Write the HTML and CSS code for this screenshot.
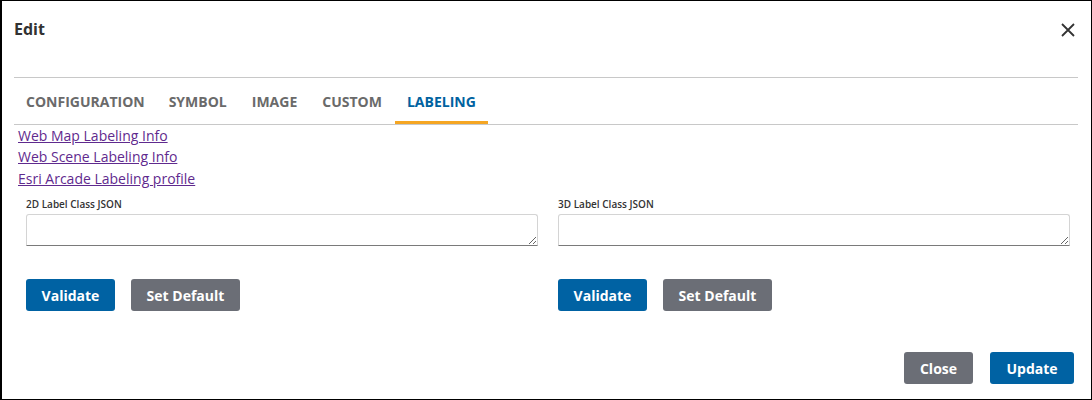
FILE: index.html
```html
<!DOCTYPE html>
<html lang="en">
<head>
    <meta charset="UTF-8">
    <title>Edit</title>
    <link rel="stylesheet" href="styles.css">
</head>
<body>
    <div class="dialog">
        <div class="dialog-header">
            <h2>Edit</h2>
            <button class="close-x" aria-label="Close">
                <svg width="14" height="14" viewBox="0 0 14 14"><path d="M1 1L13 13M13 1L1 13" stroke="#333" stroke-width="1.8" fill="none"/></svg>
            </button>
        </div>

        <!-- Tabs -->
        <div class="tabs">
            <button class="tab">Configuration</button>
            <button class="tab">Symbol</button>
            <button class="tab">Image</button>
            <button class="tab">Custom</button>
            <button class="tab active">Labeling</button>
        </div>

        <div class="tab-body">
            <div class="links">
                <a href="#">Web Map Labeling Info</a>
                <a href="#">Web Scene Labeling Info</a>
                <a href="#">Esri Arcade Labeling profile</a>
            </div>

            <div class="label-columns">
                <div class="label-col">
                    <label class="field-label">2D Label Class JSON</label>
                    <textarea class="json-input"></textarea>
                    <div class="btn-row">
                        <button class="btn btn-primary">Validate</button>
                        <button class="btn btn-secondary">Set Default</button>
                    </div>
                </div>
                <div class="label-col">
                    <label class="field-label">3D Label Class JSON</label>
                    <textarea class="json-input"></textarea>
                    <div class="btn-row">
                        <button class="btn btn-primary">Validate</button>
                        <button class="btn btn-secondary">Set Default</button>
                    </div>
                </div>
            </div>
        </div>

        <div class="dialog-footer">
            <button class="btn btn-secondary btn-close">Close</button>
            <button class="btn btn-primary btn-update">Update</button>
        </div>
    </div>
</body>
</html>
```

FILE: styles.css
```css
/* Edit dialog - labeling tab */
body {
    margin: 0;
    font-family: "Open Sans", "Noto Sans", sans-serif;
    color: #323232;
}

.dialog {
    box-sizing: border-box;
    width: 1092px;
    height: 400px;
    border: 1px solid #000;
    border-left-width: 2px;
    display: flex;
    flex-direction: column;
    background: #fff;
}

.dialog-header {
    display: flex;
    align-items: center;
    justify-content: space-between;
    height: 56px;
    padding: 0 16px 0 12px;
    margin-bottom: 20px;
}

.dialog-header h2 {
    margin: 0;
    font-size: 16px;
    font-weight: 700;
}

.close-x {
    background: none;
    border: none;
    padding: 0;
    width: 14px;
    height: 14px;
    cursor: pointer;
    margin-top: 2px;
}

.close-x svg {
    display: block;
}

.tabs {
    display: flex;
    margin: 0 13px 0 12px;
    border-top: 1px solid #c8c8c8;
    border-bottom: 1px solid #c8c8c8;
}

.tab {
    height: 46px;
    padding: 3px 12px 0;
    margin-right: 1px;
    background: transparent;
    border: none;
    border-bottom: 3px solid transparent;
    font-family: inherit;
    font-size: 14px;
    font-weight: 700;
    text-transform: uppercase;
    color: #6a6a6a;
    cursor: pointer;
}

.tab:first-child {
    margin-right: 0;
}

.tab.active {
    color: #0062a0;
    border-bottom-color: #f5a623;
}

.tab-body {
    flex: 1;
    padding: 0 21px 0 16px;
}

.links a {
    display: block;
    width: max-content;
    font-size: 14px;
    line-height: 21.4px;
    color: #5f2a8e;
}

.label-columns {
    display: grid;
    grid-template-columns: 1fr 1fr;
    gap: 20px;
    padding-left: 8px;
    margin-top: 7px;
}

.label-col {
    display: flex;
    flex-direction: column;
}

.field-label {
    font-size: 10px;
    font-weight: 600;
    color: #333;
    line-height: 16px;
    margin-bottom: 2px;
}

.json-input {
    box-sizing: border-box;
    height: 32px;
    width: 100%;
    border: 1px solid #d4d4d4;
    border-bottom: 1px solid #7a7a7a;
    border-radius: 3px 3px 0 0;
    margin: 0;
    font-family: inherit;
}

.btn-row {
    display: flex;
    gap: 16px;
    margin-top: 33px;
}

.btn {
    height: 32px;
    border: none;
    border-radius: 3px;
    font-family: inherit;
    font-size: 14px;
    font-weight: 700;
    color: #fff;
    cursor: pointer;
    padding: 0;
}

.btn-primary {
    background: #0062a3;
    width: 89px;
}

.btn-secondary {
    background: #6b6e76;
    width: 109px;
}

.dialog-footer {
    display: flex;
    justify-content: flex-end;
    gap: 17px;
    padding: 0 17px 15px 0;
}

.btn-close {
    width: 69px;
}

.btn-update {
    width: 84px;
}
```
